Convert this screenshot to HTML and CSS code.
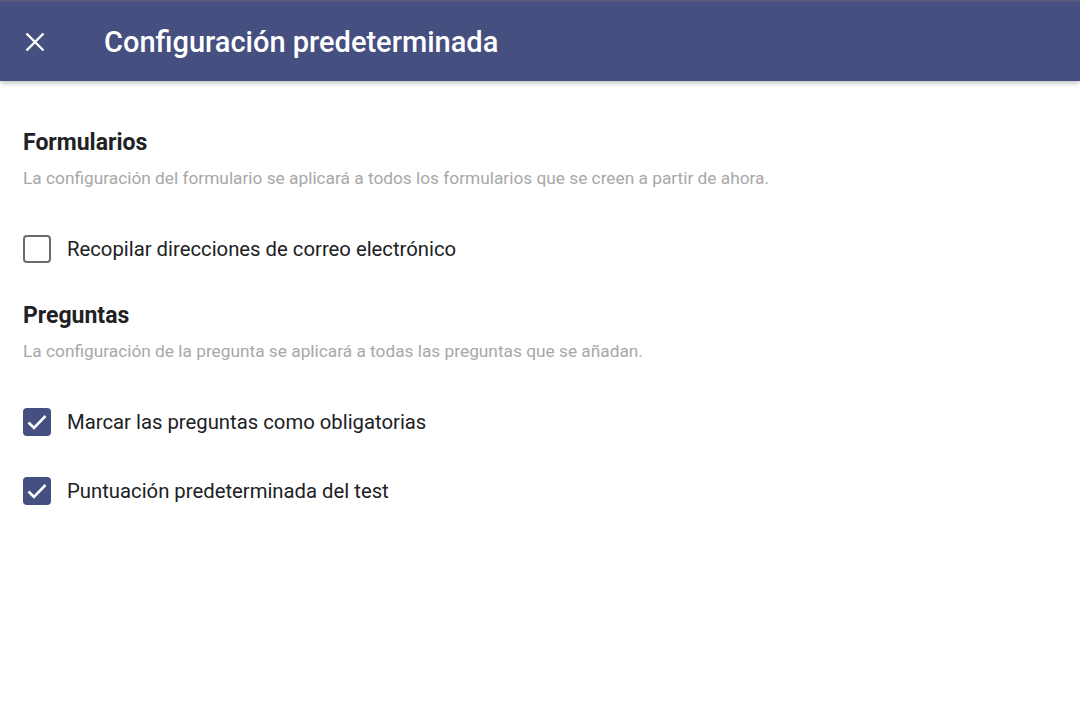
FILE: index.html
```html
<!DOCTYPE html>
<html lang="es">
<head>
  <meta charset="UTF-8">
  <meta name="viewport" content="width=device-width, initial-scale=1.0">
  <title>Configuración predeterminada</title>
  <link rel="stylesheet" href="styles.css">
</head>
<body>
  <header class="topbar">
    <button class="close-btn" type="button" aria-label="Cerrar">
      <svg width="22" height="22" viewBox="0 0 22 22">
        <path d="M2.5 2.5 L19.5 19.5 M19.5 2.5 L2.5 19.5" stroke="#fff" stroke-width="2.4"/>
      </svg>
    </button>
    <h1 class="title">Configuración predeterminada</h1>
  </header>

  <main class="content">
    <section class="section">
      <h2>Formularios</h2>
      <p class="hint">La configuración del formulario se aplicará a todos los formularios que se creen a partir de ahora.</p>
      <label class="option">
        <span class="box"></span>
        <span>Recopilar direcciones de correo electrónico</span>
      </label>
    </section>

    <section class="section">
      <h2>Preguntas</h2>
      <p class="hint">La configuración de la pregunta se aplicará a todas las preguntas que se añadan.</p>
      <label class="option">
        <span class="box checked">
          <svg width="28" height="28" viewBox="0 0 28 28"><path d="M5.5 14.5 L11 20 L22.5 8" fill="none" stroke="#fff" stroke-width="2.6"/></svg>
        </span>
        <span>Marcar las preguntas como obligatorias</span>
      </label>
      <label class="option">
        <span class="box checked">
          <svg width="28" height="28" viewBox="0 0 28 28"><path d="M5.5 14.5 L11 20 L22.5 8" fill="none" stroke="#fff" stroke-width="2.6"/></svg>
        </span>
        <span>Puntuación predeterminada del test</span>
      </label>
    </section>
  </main>
</body>
</html>
```

FILE: styles.css
```css
body {
  margin: 0;
  font-family: Roboto, "Noto Sans", sans-serif;
  background: #fff;
  color: #202124;
}

.topbar {
  display: flex;
  align-items: center;
  height: 79px;
  background: #454f80;
  border-top: 2px solid #56597a;
  box-shadow: 0 2px 5px rgba(0, 0, 0, 0.25);
}

.close-btn {
  display: flex;
  align-items: center;
  justify-content: center;
  width: 22px;
  height: 22px;
  margin-left: 24px;
  padding: 0;
  border: none;
  background: none;
}

.title {
  margin: 0 0 0 58px;
  font-size: 29px;
  font-weight: 500;
  color: #fff;
}

.content {
  padding: 48px 23px 0;
}

.section h2 {
  margin: 0;
  font-size: 23px;
  font-weight: 700;
  line-height: 28px;
}

.hint {
  margin: 10px 0 0;
  font-size: 17.3px;
  line-height: 22px;
  color: #a8a8a8;
}

.option {
  display: flex;
  align-items: center;
  gap: 16px;
  margin-top: 46px;
  font-size: 20.3px;
  line-height: 28px;
}

.section .option + .option {
  margin-top: 41px;
}

.section + .section {
  margin-top: 39px;
}

.box {
  display: flex;
  align-items: center;
  justify-content: center;
  box-sizing: border-box;
  width: 28px;
  height: 28px;
  border: 2px solid #6b6b6b;
  border-radius: 4px;
}

.box.checked {
  background: #454f80;
  border: none;
}
```
